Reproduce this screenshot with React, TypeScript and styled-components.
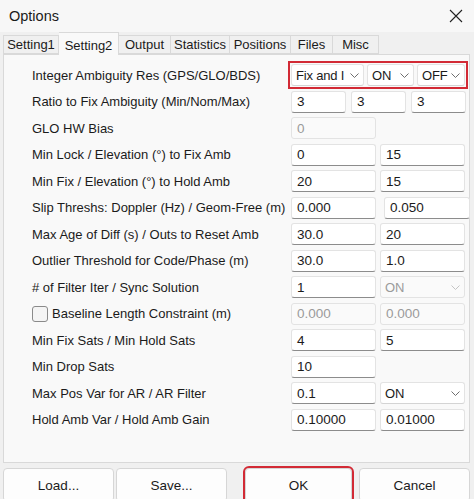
import React from 'react';
import styled, { createGlobalStyle } from 'styled-components';

const GlobalStyle = createGlobalStyle`
  body {
    margin: 0;
    background: #f0f0f0;
    font-family: 'Liberation Sans', Arial, sans-serif;
    color: #1b1b1b;
  }
`;

type Field =
  | { kind: 'input'; value: string; width: number; disabled?: boolean }
  | { kind: 'select'; value: string; width: number; disabled?: boolean };

type Row = {
  label: string;
  check?: boolean;
  highlight?: boolean;
  gap?: number;
  fields: Field[];
};

const rows: Row[] = [
  {
    label: 'Integer Ambiguity Res (GPS/GLO/BDS)',
    highlight: true,
    gap: 3,
    fields: [
      { kind: 'select', value: 'Fix and I', width: 73 },
      { kind: 'select', value: 'ON', width: 47 },
      { kind: 'select', value: 'OFF', width: 48 },
    ],
  },
  {
    label: 'Ratio to Fix Ambiguity (Min/Nom/Max)',
    gap: 5,
    fields: [
      { kind: 'input', value: '3', width: 55 },
      { kind: 'input', value: '3', width: 55 },
      { kind: 'input', value: '3', width: 55 },
    ],
  },
  { label: 'GLO HW Bias', fields: [{ kind: 'input', value: '0', width: 85, disabled: true }] },
  {
    label: 'Min Lock / Elevation (°) to Fix Amb',
    fields: [
      { kind: 'input', value: '0', width: 85 },
      { kind: 'input', value: '15', width: 85 },
    ],
  },
  {
    label: 'Min Fix / Elevation (°) to Hold Amb',
    fields: [
      { kind: 'input', value: '20', width: 85 },
      { kind: 'input', value: '15', width: 85 },
    ],
  },
  {
    label: 'Slip Threshs: Doppler (Hz) / Geom-Free (m)',
    gap: 8,
    fields: [
      { kind: 'input', value: '0.000', width: 85 },
      { kind: 'input', value: '0.050', width: 86 },
    ],
  },
  {
    label: 'Max Age of Diff (s) / Outs to Reset Amb',
    fields: [
      { kind: 'input', value: '30.0', width: 85 },
      { kind: 'input', value: '20', width: 85 },
    ],
  },
  {
    label: 'Outlier Threshold for Code/Phase (m)',
    fields: [
      { kind: 'input', value: '30.0', width: 85 },
      { kind: 'input', value: '1.0', width: 85 },
    ],
  },
  {
    label: '# of Filter Iter / Sync Solution',
    fields: [
      { kind: 'input', value: '1', width: 85 },
      { kind: 'select', value: 'ON', width: 85, disabled: true },
    ],
  },
  {
    label: 'Baseline Length Constraint (m)',
    check: true,
    fields: [
      { kind: 'input', value: '0.000', width: 85, disabled: true },
      { kind: 'input', value: '0.000', width: 85, disabled: true },
    ],
  },
  {
    label: 'Min Fix Sats / Min Hold Sats',
    fields: [
      { kind: 'input', value: '4', width: 85 },
      { kind: 'input', value: '5', width: 85 },
    ],
  },
  { label: 'Min Drop Sats', fields: [{ kind: 'input', value: '10', width: 85 }] },
  {
    label: 'Max Pos Var for AR / AR Filter',
    fields: [
      { kind: 'input', value: '0.1', width: 85 },
      { kind: 'select', value: 'ON', width: 85 },
    ],
  },
  {
    label: 'Hold Amb Var / Hold Amb Gain',
    fields: [
      { kind: 'input', value: '0.10000', width: 85 },
      { kind: 'input', value: '0.01000', width: 85 },
    ],
  },
];

const tabs = [
  { name: 'Setting1', width: 56 },
  { name: 'Setting2', width: 60 },
  { name: 'Output', width: 52 },
  { name: 'Statistics', width: 59 },
  { name: 'Positions', width: 61 },
  { name: 'Files', width: 42 },
  { name: 'Misc', width: 46 },
];

const Chevron = ({ color = '#6e6e6e' }: { color?: string }) => (
  <svg width="9" height="5" viewBox="0 0 9 5">
    <polyline points="0.5,0.5 4.5,4.5 8.5,0.5" fill="none" stroke={color} strokeWidth="1" />
  </svg>
);

const App = (): JSX.Element => (
  <>
    <GlobalStyle />
    <Window>
      <TitleBar>
        <Title>Options</Title>
        <svg width="14" height="14" viewBox="0 0 14 14">
          <path d="M1 1 L13 13 M13 1 L1 13" stroke="#222" strokeWidth="1.1" />
        </svg>
      </TitleBar>
      <TabBar>
        {tabs.map((t) => (
          <Tab key={t.name} $w={t.width} $active={t.name === 'Setting2'}>
            {t.name}
          </Tab>
        ))}
      </TabBar>
      <Panel>
        {rows.map((r) => (
          <FormRow key={r.label}>
            <Label>
              {r.check && <CheckBox />}
              {r.label}
            </Label>
            <Fields $gap={r.gap ?? 4} $highlight={r.highlight}>
              {r.fields.map((f, i) =>
                f.kind === 'input' ? (
                  <TextBox key={i} $w={f.width} $disabled={f.disabled}>
                    {f.value}
                  </TextBox>
                ) : (
                  <Select key={i} $w={f.width} $disabled={f.disabled}>
                    <SelectValue>{f.value}</SelectValue>
                    <Chevron color={f.disabled ? '#c4c4c4' : '#6e6e6e'} />
                  </Select>
                )
              )}
            </Fields>
          </FormRow>
        ))}
      </Panel>
      <ButtonBar>
        <ButtonGroup $gap={2}>
          <Button>Load...</Button>
          <Button>Save...</Button>
        </ButtonGroup>
        <ButtonGroup $gap={7}>
          <Button $highlight>OK</Button>
          <Button>Cancel</Button>
        </ButtonGroup>
      </ButtonBar>
    </Window>
  </>
);

export default App;

const Window = styled.div`
  width: 474px;
  height: 499px;
  overflow: hidden;
  display: flex;
  flex-direction: column;
  background: #f0f0f0;
`;
const TitleBar = styled.div`
  height: 32px;
  flex: none;
  display: flex;
  align-items: center;
  justify-content: space-between;
  padding: 0 11px 0 9px;
  background: #f7f7f7;
`;
const Title = styled.div`
  font-size: 14.5px;
`;
const TabBar = styled.div`
  display: flex;
  align-items: flex-end;
  height: 23px;
  padding-left: 3px;
  position: relative;
  z-index: 1;
`;
const Tab = styled.div<{ $w: number; $active?: boolean }>`
  width: ${(p) => p.$w}px;
  height: ${(p) => (p.$active ? 23 : 19)}px;
  box-sizing: border-box;
  padding-top: ${(p) => (p.$active ? 2 : 0)}px;
  margin-bottom: ${(p) => (p.$active ? -1 : 0)}px;
  display: flex;
  align-items: center;
  justify-content: center;
  font-size: 13px;
  white-space: nowrap;
  background: ${(p) => (p.$active ? '#f9f9f9' : '#f0f0f0')};
  border: 1px solid #d9d9d9;
  border-bottom: ${(p) => (p.$active ? 'none' : '1px solid #d9d9d9')};
  & + & {
    border-left: ${(p) => (p.$active ? '1px solid #d9d9d9' : 'none')};
  }
`;
const Panel = styled.div`
  margin: 0 4px 0 3px;
  height: 398px;
  flex: none;
  background: #f9f9f9;
  border: 1px solid #d9d9d9;
  padding: 9px 0 0 28px;
  display: flex;
  flex-direction: column;
  gap: 4.5px;
`;
const FormRow = styled.div`
  display: flex;
  align-items: center;
  height: 22px;
`;
const Label = styled.div`
  width: 259px;
  flex: none;
  display: flex;
  align-items: center;
  font-size: 13px;
  white-space: nowrap;
`;
const CheckBox = styled.span`
  width: 14px;
  height: 14px;
  border: 1px solid #8a8a8a;
  border-radius: 3px;
  background: #f4f4f4;
  margin-right: 4px;
`;
const Fields = styled.div<{ $gap: number; $highlight?: boolean }>`
  display: flex;
  gap: ${(p) => p.$gap}px;
  ${(p) => (p.$highlight ? 'outline: 2.5px solid #d22a35; outline-offset: 1.5px;' : '')}
`;
const TextBox = styled.div<{ $w: number; $disabled?: boolean }>`
  width: ${(p) => p.$w}px;
  height: 22px;
  box-sizing: border-box;
  padding: 0 5px;
  display: flex;
  align-items: center;
  font-size: 13.5px;
  background: ${(p) => (p.$disabled ? '#fafafa' : '#ffffff')};
  color: ${(p) => (p.$disabled ? '#9a9a9a' : '#1b1b1b')};
  border: 1px solid #e3e3e3;
  border-bottom: 1px solid ${(p) => (p.$disabled ? '#e3e3e3' : '#8c8c8c')};
  border-radius: 3px;
`;
const Select = styled(TextBox)`
  gap: 2px;
  padding: 0 4px 0 4px;
  font-size: 13px;
  letter-spacing: -0.2px;
  border-bottom-color: ${(p) => (p.$disabled ? '#e3e3e3' : '#d4d4d4')};
  svg {
    flex: none;
    margin-left: auto;
  }
`;
const SelectValue = styled.span`
  white-space: nowrap;
`;
const ButtonBar = styled.div`
  display: flex;
  justify-content: space-between;
  padding: 0 4px 0 3px;
  margin-top: 5px;
`;
const ButtonGroup = styled.div<{ $gap: number }>`
  display: flex;
  gap: ${(p) => p.$gap}px;
`;
const Button = styled.div<{ $highlight?: boolean }>`
  width: ${(p) => (p.$highlight ? 107 : 111)}px;
  height: 34px;
  box-sizing: border-box;
  display: flex;
  align-items: center;
  justify-content: center;
  font-size: 13.5px;
  background: #fdfdfd;
  border: 1px solid #d6d6d6;
  border-radius: 4px;
  ${(p) => (p.$highlight ? 'outline: 2.5px solid #d22a35; outline-offset: 0;' : '')}
`;
